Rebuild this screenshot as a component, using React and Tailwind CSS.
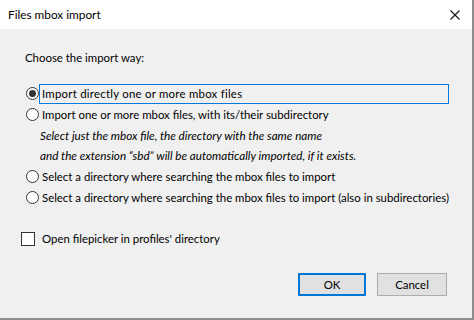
import React from "react";

const font = { fontFamily: 'Lato, "Noto Sans", sans-serif' };

function Radio({ checked }) {
  return (
    <span className="flex h-[13px] w-[13px] shrink-0 items-center justify-center rounded-full border border-[#333333] bg-white">
      {checked && <span className="h-[7px] w-[7px] rounded-full bg-[#333333]" />}
    </span>
  );
}

function RadioRow({ checked, focused, children }) {
  return (
    <div className="flex h-[21px] items-center whitespace-nowrap pl-[26px]">
      <Radio checked={checked} />
      {focused ? (
        <span className="flex h-[20px] w-[410px] items-center border border-[#0078d7] pl-[2px] tracking-[0.25px]">
          {children}
        </span>
      ) : (
        <span className="ml-[3px]">{children}</span>
      )}
    </div>
  );
}

export default function App() {
  return (
    <div
      className="flex h-[320px] w-[474px] flex-col border-r-2 border-b-2 border-[#8c8c8c] text-[11.4px] text-black"
      style={font}
    >
      {/* title bar */}
      <div className="flex h-[29px] shrink-0 items-center justify-between bg-white pl-[8px] pr-[12px] text-[11.8px]">
        <span>Files mbox import</span>
        <svg width="10" height="10" viewBox="0 0 10 10">
          <path d="M0.5 0.5 L9.5 9.5 M9.5 0.5 L0.5 9.5" stroke="#111" strokeWidth="1.1" />
        </svg>
      </div>

      <div className="flex flex-1 flex-col bg-[#f0f0f0] pt-[18px]">
        <div className="flex h-[21px] items-center pl-[25px]">Choose the import way:</div>

        <div className="mt-[15px]">
          <RadioRow checked focused>Import directly one or more mbox files</RadioRow>
          <RadioRow>Import one or more mbox files, with its/their subdirectory</RadioRow>
          <div className="flex h-[21px] items-center whitespace-nowrap pl-[40px] text-[11.7px] italic">
            Select just the mbox file, the directory with the same name
          </div>
          <div className="flex h-[20px] items-center whitespace-nowrap pl-[40px] text-[11.7px] italic">
            and the extension “sbd” will be automatically imported, if it exists.
          </div>
          <RadioRow>Select a directory where searching the mbox files to import</RadioRow>
          <RadioRow>
            Select a directory where searching the mbox files to import (also in subdirectories)
          </RadioRow>
        </div>

        <div className="mt-[20px] flex h-[21px] items-center pl-[21px]">
          <span className="h-[14px] w-[14px] border border-[#333333] bg-white" />
          <span className="ml-[7px]">Open filepicker in profiles' directory</span>
        </div>

        <div className="mt-[24px] flex justify-end gap-[11px] pr-[25px]">
          <button className="flex h-[23px] w-[68px] items-center justify-center border-2 border-[#0078d7] bg-[#e1e1e1]">
            OK
          </button>
          <button className="flex h-[23px] w-[70px] items-center justify-center border border-[#adadad] bg-[#e1e1e1]">
            Cancel
          </button>
        </div>
      </div>
    </div>
  );
}
